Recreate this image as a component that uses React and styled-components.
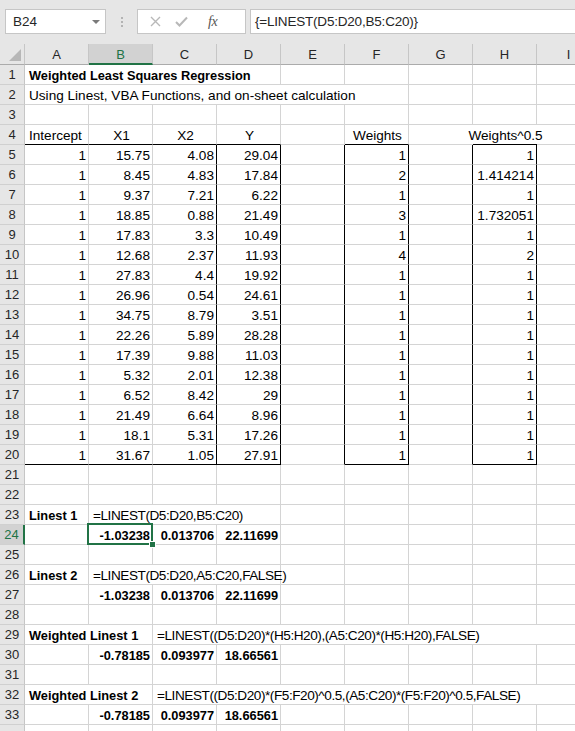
import React from 'react';
import styled, { createGlobalStyle, css } from 'styled-components';

const GlobalStyle = createGlobalStyle`
  html, body {
    margin: 0;
    padding: 0;
    background: #ffffff;
  }
  body {
    width: 575px;
    height: 731px;
    overflow: hidden;
    font-family: "Liberation Sans", Arial, sans-serif;
  }
`;

const GRID = '#d4d4d4';
const GREEN = '#217346';
const COLS = ['A', 'B', 'C', 'D', 'E', 'F', 'G', 'H', 'I'];

const x1 = ['15.75', '8.45', '9.37', '18.85', '17.83', '12.68', '27.83', '26.96', '34.75', '22.26', '17.39', '5.32', '6.52', '21.49', '18.1', '31.67'];
const x2 = ['4.08', '4.83', '7.21', '0.88', '3.3', '2.37', '4.4', '0.54', '8.79', '5.89', '9.88', '2.01', '8.42', '6.64', '5.31', '1.05'];
const ys = ['29.04', '17.84', '6.22', '21.49', '10.49', '11.93', '19.92', '24.61', '3.51', '28.28', '11.03', '12.38', '29', '8.96', '17.26', '27.91'];
const weights = ['1', '2', '1', '3', '1', '4', '1', '1', '1', '1', '1', '1', '1', '1', '1', '1'];
const roots = ['1', '1.414214', '1', '1.732051', '1', '2', '1', '1', '1', '1', '1', '1', '1', '1', '1', '1'];

// each row: list of cells { col, span, text, align, bold, bottom, right }
const buildRows = () => {
  const rows = {};
  rows[1] = [{ col: 0, span: 4, text: 'Weighted Least Squares Regression', bold: true }];
  rows[2] = [{ col: 0, span: 6, text: 'Using Linest, VBA Functions, and on-sheet calculation' }];
  rows[4] = [
    { col: 0, text: 'Intercept', bottom: true },
    { col: 1, text: 'X1', align: 'center', bottom: true },
    { col: 2, text: 'X2', align: 'center', bottom: true },
    { col: 3, text: 'Y', align: 'center', bottom: true },
    { col: 5, text: 'Weights', align: 'center', bottom: true },
    { col: 6, span: 3, text: 'Weights^0.5', align: 'center', bottomMid: true },
  ];
  for (let i = 0; i < 16; i++) {
    const last = i === 15;
    rows[5 + i] = [
      { col: 0, text: '1', align: 'right', bottom: last },
      { col: 1, text: x1[i], align: 'right', bottom: last },
      { col: 2, text: x2[i], align: 'right', bottom: last, right: true },
      { col: 3, text: ys[i], align: 'right', bottom: last, right: true },
      { col: 4, right: true },
      { col: 5, text: weights[i], align: 'right', bottom: last, right: true },
      { col: 6, right: true },
      { col: 7, text: roots[i], align: 'right', bottom: last, right: true },
    ];
  }
  rows[23] = [
    { col: 0, text: 'Linest 1', bold: true },
    { col: 1, span: 3, text: '=LINEST(D5:D20,B5:C20)', formula: true },
  ];
  rows[24] = [
    { col: 1, text: '-1.03238', align: 'right', bold: true, selected: true },
    { col: 2, text: '0.013706', align: 'right', bold: true },
    { col: 3, text: '22.11699', align: 'right', bold: true },
  ];
  rows[26] = [
    { col: 0, text: 'Linest 2', bold: true },
    { col: 1, span: 3, text: '=LINEST(D5:D20,A5:C20,FALSE)', formula: true },
  ];
  rows[27] = [
    { col: 1, text: '-1.03238', align: 'right', bold: true },
    { col: 2, text: '0.013706', align: 'right', bold: true },
    { col: 3, text: '22.11699', align: 'right', bold: true },
  ];
  rows[29] = [
    { col: 0, span: 2, text: 'Weighted Linest 1', bold: true },
    { col: 2, span: 7, text: '=LINEST((D5:D20)*(H5:H20),(A5:C20)*(H5:H20),FALSE)', formula: true },
  ];
  rows[30] = [
    { col: 1, text: '-0.78185', align: 'right', bold: true },
    { col: 2, text: '0.093977', align: 'right', bold: true },
    { col: 3, text: '18.66561', align: 'right', bold: true },
  ];
  rows[32] = [
    { col: 0, span: 2, text: 'Weighted Linest 2', bold: true },
    { col: 2, span: 7, text: '=LINEST((D5:D20)*(F5:F20)^0.5,(A5:C20)*(F5:F20)^0.5,FALSE)', formula: true },
  ];
  rows[33] = [
    { col: 1, text: '-0.78185', align: 'right', bold: true },
    { col: 2, text: '0.093977', align: 'right', bold: true },
    { col: 3, text: '18.66561', align: 'right', bold: true },
  ];
  return rows;
};

const fillRow = (cells = []) => {
  const out = [];
  let c = 0;
  while (c < COLS.length) {
    const found = cells.find((cell) => cell.col === c);
    if (found) {
      out.push({ span: 1, ...found });
      c += found.span || 1;
    } else {
      out.push({ col: c, span: 1 });
      c += 1;
    }
  }
  return out;
};

const Page = styled.div`
  width: 575px;
  height: 731px;
  overflow: hidden;
  background: #ffffff;
`;

const TopBar = styled.div`
  height: 44px;
  background: #e6e6e6;
  display: flex;
  align-items: flex-start;
  padding-top: 9px;
  box-sizing: border-box;
`;

const NameBox = styled.div`
  margin-left: 5px;
  width: 101px;
  height: 25px;
  box-sizing: border-box;
  background: #ffffff;
  border: 1px solid #c6c6c6;
  display: flex;
  align-items: center;
  justify-content: space-between;
  padding: 0 5px 0 7px;
  font-size: 13.5px;
  color: #262626;
`;

const Caret = styled.span`
  width: 0;
  height: 0;
  border-left: 4px solid transparent;
  border-right: 4px solid transparent;
  border-top: 4px solid #7a7a7a;
`;

const Dots = styled.div`
  width: 31px;
  height: 25px;
  display: flex;
  flex-direction: column;
  align-items: center;
  justify-content: center;
  gap: 2px;
  span {
    width: 2px;
    height: 2px;
    background: #b3b3b3;
  }
`;

const ButtonBox = styled.div`
  width: 109px;
  height: 25px;
  box-sizing: border-box;
  background: #ffffff;
  border: 1px solid #c6c6c6;
  display: flex;
  align-items: center;
  padding-left: 12px;
  gap: 14px;
`;

const Fx = styled.span`
  font-family: "Liberation Serif", "Times New Roman", serif;
  font-style: italic;
  font-size: 14px;
  color: #555555;
  margin-left: 6px;
  letter-spacing: -0.5px;
`;

const FormulaInput = styled.div`
  margin-left: 4px;
  flex: 1;
  height: 25px;
  box-sizing: border-box;
  background: #ffffff;
  border: 1px solid #c6c6c6;
  border-right: none;
  display: flex;
  align-items: center;
  padding-left: 4px;
  font-size: 13.5px;
  letter-spacing: -0.2px;
  color: #262626;
  white-space: nowrap;
`;

const Sheet = styled.div`
  display: grid;
  grid-template-columns: 25px repeat(9, 64px);
  grid-template-rows: 21px;
  grid-auto-rows: 20px;
  width: max-content;
  font-size: 13.6px;
  color: #000000;
`;

const Corner = styled.div`
  background: #e6e6e6;
  border-right: 1px solid #c6c6c6;
  border-bottom: 1px solid #ababab;
  box-sizing: border-box;
  position: relative;
  &::after {
    content: '';
    position: absolute;
    right: 3px;
    bottom: 3px;
    width: 0;
    height: 0;
    border-left: 12px solid transparent;
    border-bottom: 12px solid #b7b7b7;
  }
`;

const ColHead = styled.div`
  box-sizing: border-box;
  background: ${(p) => (p.$active ? '#d2d2d2' : '#e6e6e6')};
  color: ${(p) => (p.$active ? GREEN : '#262626')};
  border-right: 1px solid #c6c6c6;
  border-bottom: ${(p) => (p.$active ? `2px solid ${GREEN}` : '1px solid #ababab')};
  display: flex;
  align-items: center;
  justify-content: center;
  font-size: 13px;
  padding-top: 1px;
`;

const RowHead = styled.div`
  box-sizing: border-box;
  background: ${(p) => (p.$active ? '#d2d2d2' : '#e6e6e6')};
  color: ${(p) => (p.$active ? GREEN : '#262626')};
  border-right: ${(p) => (p.$active ? `2px solid ${GREEN}` : '1px solid #c6c6c6')};
  border-bottom: 1px solid #d0d0d0;
  display: flex;
  align-items: center;
  justify-content: center;
  font-size: 13px;
`;

const Cell = styled.div`
  grid-column: span ${(p) => p.$span};
  box-sizing: border-box;
  border-right: 1px solid ${(p) => (p.$right ? '#000000' : GRID)};
  border-bottom: 1px solid ${(p) => (p.$bottom ? '#000000' : GRID)};
  display: flex;
  align-items: center;
  justify-content: ${(p) => (p.$align === 'right' ? 'flex-end' : p.$align === 'center' ? 'center' : 'flex-start')};
  padding: 1px 2px 0 4px;
  white-space: nowrap;
  font-weight: ${(p) => (p.$bold ? 700 : 400)};
  font-size: ${(p) => (p.$bold ? '12.8px' : 'inherit')};
  letter-spacing: ${(p) => (p.$formula ? '-0.45px' : 'normal')};
  position: relative;
  ${(p) =>
    p.$bottomMid &&
    css`
      &::before {
        content: '';
        position: absolute;
        left: 64px;
        width: 64px;
        bottom: -1px;
        height: 1px;
        background: #000000;
      }
    `}
  ${(p) =>
    p.$selected &&
    css`
      &::after {
        content: '';
        position: absolute;
        left: -2px;
        top: -2px;
        right: -1px;
        bottom: -1px;
        border: 2px solid ${GREEN};
        pointer-events: none;
      }
    `}
`;

const Handle = styled.span`
  position: absolute;
  right: -4px;
  bottom: -4px;
  width: 5px;
  height: 5px;
  background: ${GREEN};
  border: 1px solid #ffffff;
  z-index: 2;
`;

const App = () => {
  const rows = buildRows();
  const rowNumbers = Array.from({ length: 34 }, (_, i) => i + 1);
  return (
    <Page>
      <GlobalStyle />
      <TopBar>
        <NameBox>
          B24
          <Caret />
        </NameBox>
        <Dots>
          <span />
          <span />
          <span />
        </Dots>
        <ButtonBox>
          <svg width="11" height="11" viewBox="0 0 11 11">
            <path d="M1 1 L10 10 M10 1 L1 10" stroke="#b8b8b8" strokeWidth="1.4" fill="none" />
          </svg>
          <svg width="13" height="11" viewBox="0 0 13 11">
            <path d="M1 6 L4.5 9.5 L12 1.5" stroke="#b8b8b8" strokeWidth="2" fill="none" />
          </svg>
          <Fx>fx</Fx>
        </ButtonBox>
        <FormulaInput>{'{=LINEST(D5:D20,B5:C20)}'}</FormulaInput>
      </TopBar>
      <Sheet>
        <Corner />
        {COLS.map((c) => (
          <ColHead key={c} $active={c === 'B'}>
            {c}
          </ColHead>
        ))}
        {rowNumbers.map((n) => (
          <React.Fragment key={n}>
            <RowHead $active={n === 24}>{n < 34 ? n : ''}</RowHead>
            {fillRow(rows[n]).map((cell) => (
              <Cell
                key={cell.col}
                $span={cell.span}
                $align={cell.align}
                $bold={cell.bold}
                $right={cell.right}
                $bottom={cell.bottom}
                $bottomMid={cell.bottomMid}
                $selected={cell.selected}
                $formula={cell.formula}
              >
                {cell.text}
                {cell.selected && <Handle />}
              </Cell>
            ))}
          </React.Fragment>
        ))}
      </Sheet>
    </Page>
  );
};

export default App;
